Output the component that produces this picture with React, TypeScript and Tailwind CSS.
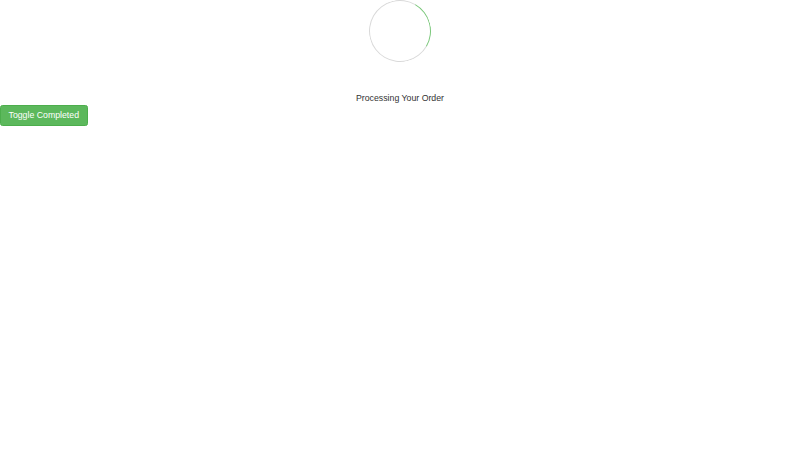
export default function App() {
  return (
    <div className="font-['Liberation_Sans',Arial,sans-serif] text-[8.75px] leading-[12.5px] text-[#333] bg-white min-h-[450px]">
      <div className="flex justify-center">
        <div className="w-[62px] h-[62px] rounded-full border border-black/15 border-l-[#7cc87c] rotate-[165deg]" />
      </div>
      <p className="text-center mt-[30px]">Processing Your Order</p>
      <button className="h-[21px] px-[7.5px] bg-[#5cb85c] border border-[#4cae4c] rounded-[2.5px] text-white leading-[12.5px]">
        Toggle Completed
      </button>
    </div>
  );
}
